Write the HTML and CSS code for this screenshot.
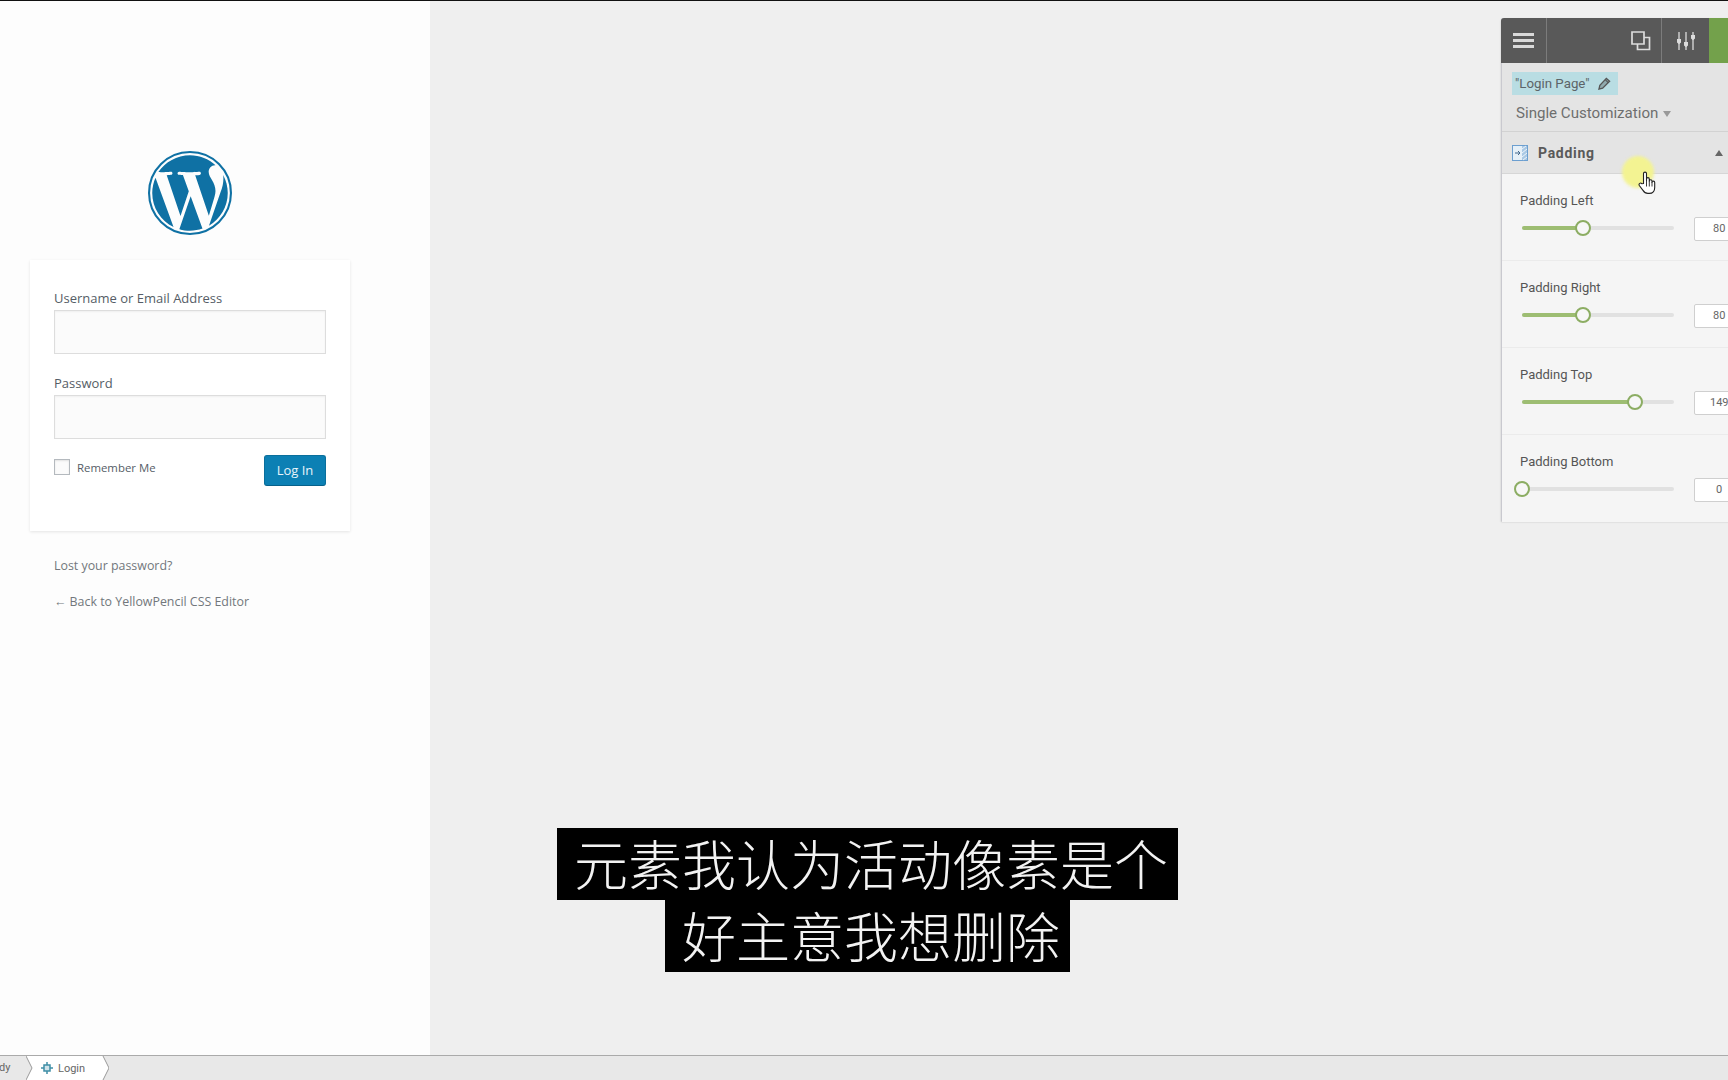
FILE: index.html
```html
<!DOCTYPE html>
<html lang="en">
<head>
<meta charset="utf-8">
<title>Login Page</title>
<link rel="stylesheet" href="styles.css">
</head>
<body>
<div class="app">
  <div class="workspace">
    <main class="login-frame">
      <svg class="wp-logo" viewBox="0 0 24 24" aria-label="WordPress"><circle class="wp-disc" cx="12" cy="12" r="11"/><path class="wp-mark" d="M21.469 6.825c.84 1.537 1.318 3.3 1.318 5.175 0 3.979-2.156 7.456-5.363 9.325l3.295-9.527c.615-1.54.82-2.771.82-3.864 0-.405-.026-.78-.07-1.11m-7.981.105c.647-.03 1.232-.105 1.232-.105.582-.075.514-.93-.067-.899 0 0-1.755.135-2.88.135-1.064 0-2.85-.15-2.85-.15-.585-.03-.661.855-.075.885 0 0 .54.061 1.125.09l1.68 4.605-2.37 7.08L5.354 6.9c.649-.03 1.234-.1 1.234-.1.585-.075.516-.93-.065-.896 0 0-1.746.138-2.874.138-.2 0-.438-.008-.69-.015C4.911 3.15 8.235 1.215 12 1.215c2.809 0 5.365 1.072 7.286 2.833-.046-.003-.091-.009-.141-.009-1.06 0-1.812.923-1.812 1.914 0 .89.513 1.643 1.06 2.531.411.72.89 1.643.89 2.977 0 .915-.354 1.994-.821 3.479l-1.075 3.585-3.9-11.61.001.014zM12 22.784c-1.059 0-2.081-.153-3.048-.437l3.237-9.406 3.315 9.087c.024.053.05.101.078.149-1.12.393-2.325.609-3.582.609M1.211 12c0-1.564.336-3.05.935-4.39L7.29 21.709C3.694 19.96 1.212 16.271 1.211 12M12 0C5.385 0 0 5.385 0 12s5.385 12 12 12 12-5.385 12-12S18.615 0 12 0"/><circle class="wp-ring" cx="12" cy="12" r="11.7"/></svg>
      <form class="login-card">
        <label class="field-label">Username or Email Address</label>
        <div class="text-input"></div>
        <label class="field-label field-label-second">Password</label>
        <div class="text-input"></div>
        <div class="form-foot">
          <div class="remember"><span class="checkbox"></span><span>Remember Me</span></div>
          <div class="login-button">Log In</div>
        </div>
      </form>
      <nav class="login-links">
        <a>Lost your password?</a>
        <a>← Back to YellowPencil CSS Editor</a>
      </nav>
    </main>
    <section class="canvas">
      <aside class="editor-panel">
        <header class="panel-top">
          <div class="top-menu">
            <svg viewBox="0 0 21 15" class="icon-menu"><path d="M0 0h21v3H0zM0 6h21v3H0zM0 12h21v3H0z"/></svg>
          </div>
          <div class="top-middle">
            <svg viewBox="0 0 20 20" class="icon-top"><path d="M1 1h12v12H1zM13 6.500h5.500v12h-12V13" fill="none" stroke="#dcdcdc" stroke-width="1.700"/></svg>
          </div>
          <div class="top-tune">
            <svg viewBox="0 0 20 20" class="icon-top"><path d="M3 1v18M10 1v18M17 1v18" stroke="#dcdcdc" stroke-width="1.300" fill="none"/><path d="M1 8h4v3.500l-2 1.700-2-1.700zM8 11h4v3.500l-2 1.700-2-1.700zM15 4h4v3.500l-2 1.700-2-1.700z" fill="#dcdcdc"/></svg>
          </div>
          <div class="top-green"></div>
        </header>
        <div class="panel-context">
          <div class="selected-tag">"Login Page"
            <svg viewBox="0 0 14 14" class="icon-pencil"><path d="M1 13l1-4 7-7.500 3.500 3-7.500 7.500z" fill="#8fa9ad" stroke="#555" stroke-width="1.400"/><path d="M8 3l3 3" stroke="#555" stroke-width="1.200"/></svg>
          </div>
          <div class="mode-select">Single Customization <span class="arrow-down"></span></div>
        </div>
        <div class="section-head">
          <svg viewBox="0 0 16 16" class="icon-padding"><rect x=".5" y=".5" width="15" height="15" fill="#e6f0f8" stroke="#6c9fd0"/><path d="M10 1h5v14h-5z" fill="#a9c8e4"/><path d="M10 4l4-3M10 8l5-4M10 12l5-4M11 15l4-3" stroke="#fff" stroke-width=".8"/><path d="M3 8h5M6 6l2 2-2 2" stroke="#44698c" fill="none"/></svg>
          <span class="section-title">Padding</span>
          <span class="arrow-up"></span>
        </div>
        <div class="section-body">
          <div class="control">
            <div class="control-label">Padding Left</div>
            <div class="control-row">
              <div class="slider"><div class="slider-fill" style="width:61px"></div><div class="slider-thumb"></div></div>
              <div class="value-box">80</div>
            </div>
          </div>
          <div class="control">
            <div class="control-label">Padding Right</div>
            <div class="control-row">
              <div class="slider"><div class="slider-fill" style="width:61px"></div><div class="slider-thumb"></div></div>
              <div class="value-box">80</div>
            </div>
          </div>
          <div class="control">
            <div class="control-label">Padding Top</div>
            <div class="control-row">
              <div class="slider"><div class="slider-fill" style="width:113px"></div><div class="slider-thumb"></div></div>
              <div class="value-box">149</div>
            </div>
          </div>
          <div class="control">
            <div class="control-label">Padding Bottom</div>
            <div class="control-row">
              <div class="slider"><div class="slider-fill" style="width:0"></div><div class="slider-thumb"></div></div>
              <div class="value-box">0</div>
            </div>
          </div>
        </div>
      </aside>
      <div class="pointer-glow"></div>
      <svg class="pointer-hand" viewBox="0 0 18 24"><path d="M5.500 12.500V2.600c0-2 3-2 3 0V9.500V8c0-1.800 2.800-1.800 2.800 0v2c0-1.700 2.700-1.700 2.700 0v1.200c0-1.500 2.700-1.500 2.700 .2v5c0 3.600-2 6-5.500 6H9.800c-2.300 0-3.600-1-4.800-3L1.300 14.500c-1-1.800 1.300-3.300 2.500-1.800z" fill="#fff" stroke="#222" stroke-width="1.100" stroke-linejoin="round"/><path d="M8.500 9.500v6M11.300 10v5.500M14 11v4.500" stroke="#222" stroke-width=".9" fill="none"/></svg>
      <div class="subtitle" lang="zh-CN">
        <span class="subtitle-line">元素我认为活动像素是个</span>
        <span class="subtitle-line">好主意我想删除</span>
      </div>
    </section>
  </div>
  <footer class="breadcrumb">
    <span class="crumb-prev">dy</span>
    <svg class="chevron" viewBox="0 0 8 24" preserveAspectRatio="none"><path d="M0 0l6 12-6 12h8V0z" fill="#fff"/><path d="M0 0l6 12-6 12" fill="none" stroke="#999"/></svg>
    <span class="crumb-current">
      <svg class="icon-chip" viewBox="0 0 12 12"><path d="M3 3h6v6H3z" fill="#cfe3ea" stroke="#3f8ea6" stroke-width="1.500"/><path d="M6 0v3M6 9v3M0 6h3M9 6h3" stroke="#3f8ea6" stroke-width="1.500"/></svg>
      Login
    </span>
    <svg class="chevron" viewBox="0 0 8 24" preserveAspectRatio="none"><path d="M0 0h2l6 12-6 12H0z" fill="#fff"/><path d="M2 0l6 12-6 12" fill="none" stroke="#999"/></svg>
  </footer>
</div>
</body>
</html>
```
FILE: styles.css
```css
* { box-sizing: border-box; }
html, body { margin: 0; height: 100%; overflow: hidden; }
body { background: #efefef; font-family: "Open Sans", "Liberation Sans", sans-serif; }

.app { display: flex; flex-direction: column; width: 1728px; height: 1080px; border-top: 1px solid #111; }
.workspace { flex: 1; display: flex; min-height: 0; }

/* login preview */
.login-frame { width: 430px; background: #fdfdfd; padding-top: 150px; display: flex; flex-direction: column; align-items: flex-start; flex-shrink: 0; }
.wp-logo { width: 84px; height: 84px; margin: 0 0 0 148px; display: block; }
.wp-disc { fill: #0f71a4; }
.wp-mark { fill: #fdfdfd; }
.wp-ring { fill: none; stroke: #0f71a4; stroke-width: .6; }
.login-card { width: 320px; height: 271px; margin: 25px 0 0 30px; padding: 29px 24px 0; background: #fff; box-shadow: 0 1px 3px rgba(0,0,0,.1); display: flex; flex-direction: column; }
.field-label { font-size: 13px; line-height: 18px; height: 21px; color: #555d66; }
.field-label-second { margin-top: 20px; }
.text-input { height: 44px; background: #fbfbfb; border: 1px solid #ddd; box-shadow: inset 0 1px 2px rgba(0,0,0,.05); flex-shrink: 0; }
.form-foot { display: flex; justify-content: space-between; align-items: flex-start; margin-top: 16px; }
.remember { display: flex; align-items: center; gap: 7px; font-size: 11.400px; color: #555d66; margin-top: 4px; }
.checkbox { width: 16px; height: 16px; border: 1px solid #b4b9be; background: #fbfbfb; box-shadow: inset 0 1px 2px rgba(0,0,0,.1); }
.login-button { width: 62px; height: 31px; background: #0c80b4; border: 1px solid #0a6f9c; border-bottom-color: #07618a; border-radius: 3px; color: #e8f4fa; font-size: 13px; line-height: 28px; text-align: center; }
.login-links { display: flex; flex-direction: column; gap: 18px; margin: 26px 0 0 54px; font-size: 12.400px; line-height: 18px; color: #72777c; }

/* editor canvas */
.canvas { flex: 1; position: relative; background: #efefef; }

.editor-panel { position: absolute; left: 1071px; top: 17px; width: 270px; height: 503px; background: #e4e4e4; border-left: 1px solid #c9c9cf; border-radius: 3px 0 0 0; box-shadow: 0 1px 2px rgba(0,0,0,.2); display: flex; flex-direction: column; color: #555; font-family: Roboto, "Liberation Sans", sans-serif; }
.panel-top { height: 45px; display: flex; background: #595959; flex-shrink: 0; margin-left: -1px; border-radius: 3px 0 0 0; }
.top-menu { width: 46px; border-right: 1px solid #7c7c7c; display: flex; align-items: center; justify-content: center; }
.icon-menu { width: 21px; height: 15px; fill: #d9d9d9; margin-right: 1px; }
.top-middle { width: 115px; border-right: 1px solid #7c7c7c; display: flex; align-items: center; justify-content: flex-end; padding-right: 10px; }
.icon-top { width: 20px; height: 20px; }
.top-tune { width: 47px; display: flex; align-items: center; justify-content: center; }
.top-green { flex: 1; background: #73a14b; }

.panel-context { height: 69px; padding: 9px 0 0 10px; border-bottom: 1px solid #d2d2d2; flex-shrink: 0; }
.selected-tag { width: 106px; height: 23px; background: #b9dde3; color: #5c6468; font-size: 13.300px; line-height: 23px; padding-left: 3px; display: flex; align-items: center; gap: 8px; white-space: nowrap; }
.icon-pencil { width: 13px; height: 13px; }
.mode-select { margin: 8px 0 0 4px; font-size: 15.100px; line-height: 20px; color: #6e6e6e; white-space: nowrap; }
.arrow-down { display: inline-block; width: 0; height: 0; border: 4px solid transparent; border-top: 6px solid #999; border-bottom: 0; margin-left: 1px; vertical-align: 1px; }

.section-head { height: 42px; display: flex; align-items: center; padding-left: 10px; border-bottom: 1px solid #d6d6d6; flex-shrink: 0; }
.icon-padding { width: 16px; height: 16px; }
.section-title { font-weight: 700; font-size: 14px; color: #5a5a5a; margin-left: 10px; letter-spacing: .7px; }
.arrow-up { width: 0; height: 0; border: 4px solid transparent; border-bottom: 6px solid #666; border-top: 0; margin-left: 120px; }

.section-body { flex: 1; background: #f5f5f5; }
.control { height: 87px; padding: 17px 0 0 18px; border-bottom: 1px solid #ebebeb; }
.control:last-child { border-bottom: 0; }
.control-label { font-size: 13px; line-height: 20px; color: #555; }
.control-row { display: flex; align-items: center; margin-top: 5px; height: 24px; }
.slider { width: 152px; height: 4px; margin-left: 2px; border-radius: 2px; background: #e1e1e1; display: flex; align-items: center; }
.slider-fill { height: 4px; background: #9dbd72; border-radius: 2px; flex-shrink: 0; }
.slider-thumb { width: 16px; height: 16px; margin-left: -8px; border: 2px solid #8cad63; border-radius: 50%; background: #f7f7f7; flex-shrink: 0; }
.value-box { width: 50px; height: 24px; margin: 2px 0 0 20px; border: 1px solid #cfcfcf; border-radius: 2px; background: #fff; font-size: 11px; line-height: 22px; color: #666; padding-left: 18px; flex-shrink: 0; }
.control:nth-child(3) .value-box { padding-left: 15px; }
.control:nth-child(4) .value-box { padding-left: 21px; }

.pointer-glow { position: absolute; left: 1192px; top: 155px; width: 32px; height: 32px; border-radius: 50%; background: #f3f392; filter: blur(1.500px); }
.pointer-hand { position: absolute; left: 1208px; top: 170px; width: 18px; height: 24px; }

.subtitle { position: absolute; left: 127px; top: 827px; width: 621px; display: flex; flex-direction: column; align-items: center; font-family: "Noto Sans CJK SC", sans-serif; font-weight: 300; font-size: 54px; line-height: 70px; color: #f2f2f2; }
.subtitle-line { display: block; background: #000; padding: 0 10px 0 17px; white-space: nowrap; height: 72px; }

/* breadcrumb */
.breadcrumb { height: 25px; display: flex; align-items: stretch; background: #e8e8e8; border-top: 1px solid #aaa; font-family: Roboto, "Liberation Sans", sans-serif; font-size: 11px; color: #666; flex-shrink: 0; }
.crumb-prev { width: 26px; line-height: 24px; text-indent: -1px; overflow: hidden; }
.chevron { width: 8px; height: 24px; display: block; flex-shrink: 0; }
.crumb-current { width: 67px; background: #fff; display: flex; align-items: center; gap: 5px; padding-left: 7px; }
.icon-chip { width: 12px; height: 12px; }
```
